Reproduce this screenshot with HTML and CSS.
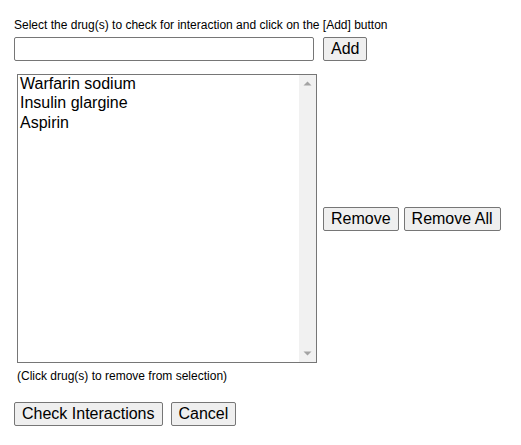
FILE: index.html
```html
<!DOCTYPE html>
<html>
<head>
<meta charset="utf-8">
<link rel="stylesheet" href="styles.css">
</head>
<body>
<div class="page">
  <div class="title">Select the drug(s) to check for interaction and click on the [Add] button</div>
  <div class="add-row">
    <input class="drug-input" type="text">
    <button class="btn">Add</button>
  </div>
  <div class="list-row">
    <div class="listbox">
      <div class="options">
        <div class="option">Warfarin sodium</div>
        <div class="option">Insulin glargine</div>
        <div class="option">Aspirin</div>
      </div>
      <div class="scrollbar">
        <div class="arrow">
          <svg width="17" height="17" viewBox="0 0 17 17"><path d="M4.5 10.5 L8.5 6.5 L12.5 10.5 Z" fill="#a3a3a3"/></svg>
        </div>
        <div class="arrow">
          <svg width="17" height="17" viewBox="0 0 17 17"><path d="M4.5 6.5 L8.5 10.5 L12.5 6.5 Z" fill="#a3a3a3"/></svg>
        </div>
      </div>
    </div>
    <div class="side-buttons">
      <button class="btn">Remove</button>
      <button class="btn">Remove All</button>
    </div>
  </div>
  <div class="note">(Click drug(s) to remove from selection)</div>
  <div class="actions">
    <button class="btn">Check Interactions</button>
    <button class="btn">Cancel</button>
  </div>
</div>
</body>
</html>
```

FILE: styles.css
```css
html, body {
  margin: 0;
  padding: 0;
  background: #ffffff;
}
.page {
  padding: 18px 0 0 14px;
  font-family: Arial, "Liberation Sans", sans-serif;
  color: #000;
}
.title {
  font-size: 12px;
  line-height: 14px;
  margin-bottom: 5px;
}
.add-row {
  display: flex;
  align-items: center;
  gap: 9px;
}
.drug-input {
  box-sizing: border-box;
  width: 300px;
  height: 24px;
  margin: 0;
  border: 1px solid #767676;
  border-radius: 2px;
  padding: 1px 2px;
  font-family: Arial, "Liberation Sans", sans-serif;
  font-size: 16px;
  background: #fff;
}
.btn {
  box-sizing: border-box;
  height: 24px;
  margin: 0;
  padding: 1px 7px;
  border: 1px solid #767676;
  border-radius: 2px;
  background: #efefef;
  color: #000;
  font-family: Arial, "Liberation Sans", sans-serif;
  font-size: 16px;
  line-height: 18px;
}
.list-row {
  display: flex;
  align-items: center;
  margin-top: 13px;
  margin-left: 3px;
}
.listbox {
  box-sizing: border-box;
  width: 300px;
  height: 289px;
  border: 1px solid #767676;
  display: flex;
  background: #fff;
}
.options {
  flex: 1;
  font-size: 16px;
}
.option {
  padding: 0 2px 1px;
  line-height: 18.4px;
  white-space: nowrap;
}
.scrollbar {
  width: 17px;
  background: #f1f1f1;
  display: flex;
  flex-direction: column;
  justify-content: space-between;
}
.arrow {
  width: 17px;
  height: 17px;
}
.arrow svg {
  display: block;
}
.side-buttons {
  display: flex;
  gap: 5px;
  margin-left: 6px;
}
.note {
  font-size: 12px;
  line-height: 14px;
  margin-top: 6px;
  margin-left: 3px;
}
.actions {
  display: flex;
  gap: 8px;
  margin-top: 19px;
}
```
